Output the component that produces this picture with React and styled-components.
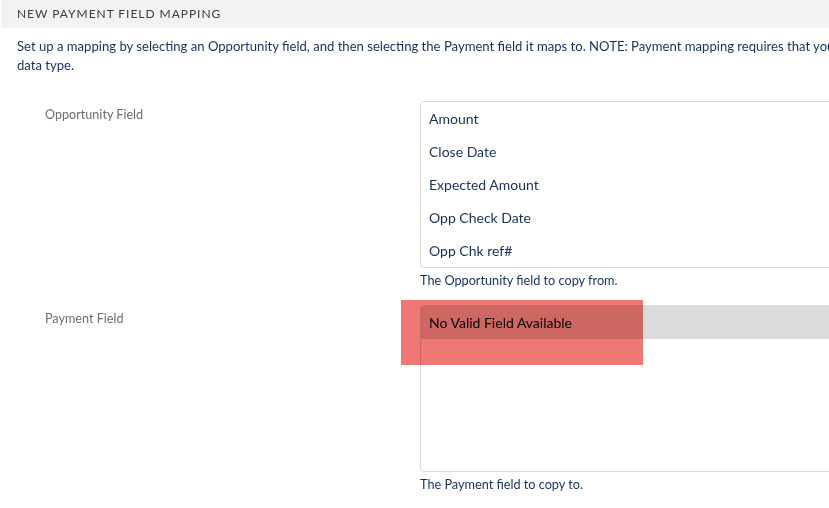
import styled, { createGlobalStyle } from "styled-components";

const GlobalStyle = createGlobalStyle`
  html, body {
    margin: 0;
    padding: 0;
    background: #ffffff;
    overflow: hidden;
  }
  body {
    font-family: "Lato", "Liberation Sans", sans-serif;
  }
`;

const Page = styled.div`
  position: relative;
  width: 829px;
  height: 508px;
  overflow: hidden;
`;

const SectionHeader = styled.div`
  height: 28px;
  line-height: 28px;
  background: #f3f2f2;
  margin-left: 1px;
  padding-left: 16px;
  font-size: 12px;
  letter-spacing: 0.08em;
  text-transform: uppercase;
  color: #3e3e3c;
  white-space: nowrap;
`;

const Intro = styled.p`
  margin: 0;
  padding: 9px 0 0 17px;
  width: 1100px;
  font-size: 13.1px;
  line-height: 18.5px;
  color: #16325c;
  white-space: nowrap;
`;

const Form = styled.div`
  display: flex;
  flex-direction: column;
  gap: 16px;
  padding-top: 27px;
`;

const FieldRow = styled.div`
  display: grid;
  grid-template-columns: 420px 500px;
`;

const Label = styled.div`
  padding: 6px 0 0 45px;
  font-size: 12.6px;
  line-height: 15px;
  color: #706e6b;
`;

const Control = styled.div`
  display: flex;
  flex-direction: column;
`;

const ListBox = styled.div`
  height: 165px;
  border: 1px solid #dddbda;
  border-radius: 4px;
  overflow: hidden;
  display: flex;
  flex-direction: column;
`;

const Option = styled.div`
  height: 33px;
  line-height: 33px;
  padding-left: 8px;
  font-size: 14px;
  flex-shrink: 0;
  color: ${(p) => (p.$selected ? "#080707" : "#16325c")};
  background: ${(p) => (p.$selected ? "#dbdbdb" : "transparent")};
`;

const HelpText = styled.div`
  margin-top: 3px;
  font-size: 12.7px;
  line-height: 18px;
  color: #16325c;
`;

const Highlight = styled.div`
  position: absolute;
  left: 401px;
  top: 300px;
  width: 242px;
  height: 65px;
  background: #ef7872;
  mix-blend-mode: multiply;
  pointer-events: none;
`;

const opportunityFields = [
  "Amount",
  "Close Date",
  "Expected Amount",
  "Opp Check Date",
  "Opp Chk ref#",
];

const App = () => {
  return (
    <Page>
      <GlobalStyle />
      <SectionHeader>New Payment Field Mapping</SectionHeader>
      <Intro>
        Set up a mapping by selecting an Opportunity field, and then selecting the Payment field it maps to. NOTE: Payment mapping requires that you have fields of matching
        <br />
        data type.
      </Intro>
      <Form>
        <FieldRow>
          <Label>Opportunity Field</Label>
          <Control>
            <ListBox>
              {opportunityFields.map((f) => (
                <Option key={f}>{f}</Option>
              ))}
            </ListBox>
            <HelpText>The Opportunity field to copy from.</HelpText>
          </Control>
        </FieldRow>
        <FieldRow>
          <Label>Payment Field</Label>
          <Control>
            <ListBox>
              <Option $selected>No Valid Field Available</Option>
            </ListBox>
            <HelpText>The Payment field to copy to.</HelpText>
          </Control>
        </FieldRow>
      </Form>
      <Highlight />
    </Page>
  );
};

export default App;
